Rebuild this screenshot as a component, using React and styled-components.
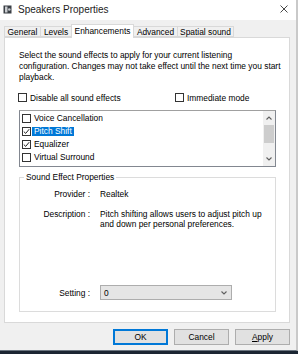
import React from "react";
import styled, { createGlobalStyle } from "styled-components";

const Global = createGlobalStyle`
  html, body { margin: 0; padding: 0; background: #1b2532; }
  * { box-sizing: border-box; }
  #root { width: 298px; height: 354px; overflow: hidden; }
`;

const Window = styled.div`
  width: 298px;
  height: 351px;
  background: #f0f0f0;
  border-right: 2px solid #c9c9c9;
  border-bottom: 1px solid #6b7580;
  font-family: "Liberation Sans", Arial, sans-serif;
  font-size: 8.4px;
  color: #000;
  display: flex;
  flex-direction: column;
`;

const TitleBar = styled.div`
  height: 20px;
  background: #fff;
  display: flex;
  align-items: center;
  padding: 0 8px 2px 3px;
  gap: 6px;
  font-size: 10px;
  color: #222;
`;

const Title = styled.span`
  flex: 1;
`;

const Body = styled.div`
  flex: 1;
  display: flex;
  flex-direction: column;
  padding: 4px 6px 0 4px;
`;

const TabStrip = styled.div`
  display: flex;
  align-items: flex-end;
  height: 13px;
  position: relative;
  z-index: 1;
`;

const Tab = styled.div`
  height: ${(p) => (p.$active ? "14px" : "11px")};
  margin-bottom: ${(p) => (p.$active ? "-1px" : "0")};
  width: ${(p) => p.$w}px;
  background: ${(p) => (p.$active ? "#fff" : "#f0f0f0")};
  border: 1px solid #d9d9d9;
  border-bottom: ${(p) => (p.$active ? "none" : "1px solid #d9d9d9")};
  margin-left: -1px;
  display: flex;
  align-items: center;
  justify-content: center;
  padding-bottom: ${(p) => (p.$active ? "2px" : "0")};
  &:first-child { margin-left: 0; }
`;

const Panel = styled.div`
  height: 286px;
  flex: none;
  background: #fff;
  border: 1px solid #d9d9d9;
  padding: 12px 13px 10px 14px;
  display: flex;
  flex-direction: column;
  & > * { flex-shrink: 0; }
`;

const Intro = styled.p`
  margin: 0;
  line-height: 11px;
  white-space: nowrap;
`;

const CheckRow = styled.div`
  display: flex;
  align-items: center;
  margin-top: 10px;
  height: 9px;
  margin-left: -1px;
`;

const CheckLabel = styled.label`
  display: flex;
  align-items: center;
  gap: 3px;
  width: ${(p) => p.$w || "auto"};
`;

const Box = styled.span`
  width: 9px;
  height: 9px;
  border: 1px solid #333;
  background: #fff;
  display: inline-flex;
  align-items: center;
  justify-content: center;
  flex: none;
`;

const ListBox = styled.div`
  margin-top: 8px;
  height: 57px;
  border: 1px solid #828790;
  border-top-color: #a0a0a0;
  display: flex;
  overflow: hidden;
`;

const Items = styled.div`
  flex: 1;
  padding: 1px 0 0 2px;
`;

const Item = styled.div`
  height: 13px;
  display: flex;
  align-items: center;
  gap: 1px;
`;

const ItemText = styled.span`
  padding: 0 2px;
  line-height: 9px;
  background: ${(p) => (p.$sel ? "#0078d7" : "transparent")};
  color: ${(p) => (p.$sel ? "#fff" : "#000")};
`;

const ScrollBar = styled.div`
  width: 12px;
  background: #f0f0f0;
  display: flex;
  flex-direction: column;
  align-items: center;
`;

const Arrow = styled.div`
  height: 14px;
  width: 12px;
  display: flex;
  align-items: center;
  justify-content: center;
`;

const Thumb = styled.div`
  width: 10px;
  height: 18px;
  background: #cdcdcd;
`;

const Track = styled.div`
  flex: 1;
`;

const Group = styled.fieldset`
  margin: 5px 0 0 0;
  flex: 1 1 auto !important;
  min-height: 0;
  border: 1px solid #dcdcdc;
  padding: 6px 0 0 0;
  min-width: 0;
`;

const Legend = styled.legend`
  margin-left: 4px;
  padding: 0 2px;
  line-height: 11px;
`;

const PropRow = styled.div`
  display: grid;
  grid-template-columns: 70px 1fr;
  column-gap: 10px;
  line-height: 10px;
  align-items: ${(p) => (p.$center ? "center" : "start")};
  margin-top: ${(p) => p.$mt || 0}px;
`;

const PropLabel = styled.span`
  text-align: right;
`;

const PropValue = styled.span`
  white-space: nowrap;
`;

const Select = styled.div`
  width: 132px;
  height: 15px;
  background: #e5e5e5;
  border: 1px solid #adadad;
  display: flex;
  align-items: center;
  justify-content: space-between;
  padding: 0 4px 0 3px;
`;

const ButtonRow = styled.div`
  display: flex;
  justify-content: flex-end;
  gap: 6px;
  margin-top: 6px;
`;

const Button = styled.button`
  width: 55px;
  height: 16px;
  background: #e1e1e1;
  border: 1px solid ${(p) => (p.$primary ? "#0078d7" : "#adadad")};
  box-shadow: ${(p) => (p.$primary ? "inset 0 0 0 1px #0078d7" : "none")};
  font-family: inherit;
  font-size: 8.4px;
  color: #000;
  padding: 0;
`;

const Check = () => (
  <svg width="7" height="7" viewBox="0 0 7 7">
    <path d="M0.8 3.6 L2.7 5.4 L6.2 1.2" fill="none" stroke="#222" strokeWidth="1" />
  </svg>
);

const Chevron = ({ up }) => (
  <svg width="6" height="4" viewBox="0 0 6 4">
    <path d={up ? "M0.5 3.5 L3 1 L5.5 3.5" : "M0.5 0.5 L3 3 L5.5 0.5"} fill="none" stroke="#606060" strokeWidth="1.1" />
  </svg>
);

const items = [
  { label: "Voice Cancellation", checked: false },
  { label: "Pitch Shift", checked: true, sel: true },
  { label: "Equalizer", checked: true },
  { label: "Virtual Surround", checked: false },
];

const tabs = [
  ["General", 37],
  ["Levels", 32],
  ["Enhancements", 63],
  ["Advanced", 45],
  ["Spatial sound", 57],
];

export default function App() {
  return (
    <>
      <Global />
      <Window>
        <TitleBar>
          <svg width="9" height="9" viewBox="0 0 9 9">
            <rect x="0.5" y="0.5" width="8" height="8" fill="#3a3f45" />
            <rect x="2" y="1.5" width="2.5" height="6" fill="#c9ccd0" />
            <circle cx="6.3" cy="4.5" r="1.3" fill="#c9ccd0" />
          </svg>
          <Title>Speakers Properties</Title>
          <svg width="8" height="8" viewBox="0 0 8 8">
            <path d="M0.5 0.5 L7.5 7.5 M7.5 0.5 L0.5 7.5" stroke="#333" strokeWidth="0.9" />
          </svg>
        </TitleBar>
        <Body>
          <TabStrip>
            {tabs.map(([t, w]) => (
              <Tab key={t} $w={w} $active={t === "Enhancements"}>{t}</Tab>
            ))}
          </TabStrip>
          <Panel>
            <Intro>
              Select the sound effects to apply for your current listening
              <br />
              configuration. Changes may not take effect until the next time you start
              <br />
              playback.
            </Intro>
            <CheckRow>
              <CheckLabel $w="157px"><Box />Disable all sound effects</CheckLabel>
              <CheckLabel><Box />Immediate mode</CheckLabel>
            </CheckRow>
            <ListBox>
              <Items>
                {items.map((it) => (
                  <Item key={it.label}>
                    <Box>{it.checked && <Check />}</Box>
                    <ItemText $sel={it.sel}>{it.label}</ItemText>
                  </Item>
                ))}
              </Items>
              <ScrollBar>
                <Arrow><Chevron up /></Arrow>
                <Thumb />
                <Track />
                <Arrow><Chevron /></Arrow>
              </ScrollBar>
            </ListBox>
            <Group>
              <Legend>Sound Effect Properties</Legend>
              <PropRow>
                <PropLabel>Provider :</PropLabel>
                <PropValue>Realtek</PropValue>
              </PropRow>
              <PropRow $mt={10}>
                <PropLabel>Description :</PropLabel>
                <PropValue>Pitch shifting allows users to adjust pitch up<br />and down per personal preferences.</PropValue>
              </PropRow>
              <PropRow $center $mt={56}>
                <PropLabel>Setting :</PropLabel>
                <Select>
                  <span>0</span>
                  <Chevron />
                </Select>
              </PropRow>
            </Group>
          </Panel>
          <ButtonRow>
            <Button $primary>OK</Button>
            <Button>Cancel</Button>
            <Button><u>A</u>pply</Button>
          </ButtonRow>
        </Body>
      </Window>
    </>
  );
}
